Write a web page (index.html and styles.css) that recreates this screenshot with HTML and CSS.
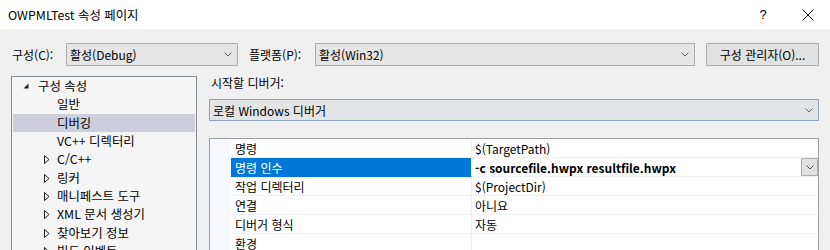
FILE: index.html
```html
<!DOCTYPE html>
<html lang="ko">
<head>
<meta charset="utf-8">
<title>OWPMLTest 속성 페이지</title>
<link rel="stylesheet" href="styles.css">
</head>
<body>
<div class="titlebar">
  <span class="title">OWPMLTest 속성 페이지</span>
  <span class="help">?</span>
  <span class="close"><svg width="12" height="12" viewBox="0 0 12 12"><path d="M0.5 0.5 L11.5 11.5 M11.5 0.5 L0.5 11.5" stroke="#1a1a1a" stroke-width="1" fill="none"/></svg></span>
</div>

<div class="toolbar">
  <span class="lbl lbl-config">구성(C):</span>
  <div class="combo combo-config"><span class="combo-text">활성(Debug)</span><svg class="chev" width="8" height="5" viewBox="0 0 8 5"><path d="M0.5 0.5 L4 4 L7.5 0.5" stroke="#606060" fill="none"/></svg></div>
  <span class="lbl lbl-platform">플랫폼(P):</span>
  <div class="combo combo-platform"><span class="combo-text">활성(Win32)</span><svg class="chev" width="8" height="5" viewBox="0 0 8 5"><path d="M0.5 0.5 L4 4 L7.5 0.5" stroke="#606060" fill="none"/></svg></div>
  <div class="btn">구성 관리자(O)...</div>
</div>

<div class="main">
  <div class="tree">
    <div class="node lvl0"><svg class="tri" width="6" height="6" viewBox="0 0 6 6"><polygon points="5.5,0.5 5.5,5.5 0.5,5.5" fill="#1e1e1e"/></svg><span>구성 속성</span></div>
    <div class="node lvl1"><span>일반</span></div>
    <div class="node lvl1 selected"><span>디버깅</span></div>
    <div class="node lvl1"><span>VC++ 디렉터리</span></div>
    <div class="node lvl1 has-kids"><svg class="tri" width="6" height="9" viewBox="0 0 6 9"><path d="M0.5 0.5 L5 4.5 L0.5 8.5 Z" stroke="#1e1e1e" fill="none"/></svg><span>C/C++</span></div>
    <div class="node lvl1 has-kids"><svg class="tri" width="6" height="9" viewBox="0 0 6 9"><path d="M0.5 0.5 L5 4.5 L0.5 8.5 Z" stroke="#1e1e1e" fill="none"/></svg><span>링커</span></div>
    <div class="node lvl1 has-kids"><svg class="tri" width="6" height="9" viewBox="0 0 6 9"><path d="M0.5 0.5 L5 4.5 L0.5 8.5 Z" stroke="#1e1e1e" fill="none"/></svg><span>매니페스트 도구</span></div>
    <div class="node lvl1 has-kids"><svg class="tri" width="6" height="9" viewBox="0 0 6 9"><path d="M0.5 0.5 L5 4.5 L0.5 8.5 Z" stroke="#1e1e1e" fill="none"/></svg><span>XML 문서 생성기</span></div>
    <div class="node lvl1 has-kids"><svg class="tri" width="6" height="9" viewBox="0 0 6 9"><path d="M0.5 0.5 L5 4.5 L0.5 8.5 Z" stroke="#1e1e1e" fill="none"/></svg><span>찾아보기 정보</span></div>
    <div class="node lvl1 has-kids"><svg class="tri" width="6" height="9" viewBox="0 0 6 9"><path d="M0.5 0.5 L5 4.5 L0.5 8.5 Z" stroke="#1e1e1e" fill="none"/></svg><span>빌드 이벤트</span></div>
  </div>

  <div class="pane">
    <div class="pane-label">시작할 디버거:</div>
    <div class="combo combo-debugger"><span class="combo-text">로컬 Windows 디버거</span><svg class="chev" width="8" height="5" viewBox="0 0 8 5"><path d="M0.5 0.5 L4 4 L7.5 0.5" stroke="#606060" fill="none"/></svg></div>
    <div class="grid">
      <div class="row"><div class="margin"></div><div class="name">명령</div><div class="value">$(TargetPath)</div></div>
      <div class="row active"><div class="margin"></div><div class="name">명령 인수</div><div class="value"><span class="val-text bold">-c sourcefile.hwpx resultfile.hwpx</span><span class="drop"><svg width="8" height="5" viewBox="0 0 8 5"><path d="M0.5 0.5 L4 4 L7.5 0.5" stroke="#505050" fill="none"/></svg></span></div></div>
      <div class="row"><div class="margin"></div><div class="name">작업 디렉터리</div><div class="value">$(ProjectDir)</div></div>
      <div class="row"><div class="margin"></div><div class="name">연결</div><div class="value">아니요</div></div>
      <div class="row"><div class="margin"></div><div class="name">디버거 형식</div><div class="value">자동</div></div>
      <div class="row"><div class="margin"></div><div class="name">환경</div><div class="value"></div></div>
    </div>
  </div>
</div>
</body>
</html>
```

FILE: styles.css
```css
* { box-sizing: border-box; }
html, body { margin: 0; padding: 0; }
body {
  width: 830px;
  height: 250px;
  overflow: hidden;
  background: #f0f0f0;
  font-family: "Noto Sans CJK KR", "Noto Sans", sans-serif;
  font-size: 12px;
  color: #000;
}

.titlebar {
  height: 29px;
  background: #fff;
  display: flex;
  align-items: center;
  padding-left: 8px;
}
.title { flex: 1; white-space: nowrap; font-size: 12.4px; }
.help {
  width: 46px;
  text-align: center;
  font-family: "Liberation Sans", sans-serif;
  font-size: 13px;
}
.close {
  width: 44px;
  display: flex;
  justify-content: center;
  align-items: center;
}

.toolbar {
  margin-top: 14px;
  height: 23px;
  display: flex;
  align-items: center;
  padding-left: 12px;
}
.lbl { white-space: nowrap; }
.lbl-config { width: 54px; }
.lbl-platform { width: 66px; margin-left: 11px; }

.combo {
  height: 23px;
  border: 1px solid #adadad;
  background: #e5e5e5;
  display: flex;
  align-items: center;
  padding: 0 5px 0 3px;
}
.combo-text { flex: 1; white-space: nowrap; }
.chev { display: block; }
.combo-config { width: 172px; }
.combo-platform { width: 380px; }

.btn {
  margin-left: 11px;
  width: 113px;
  height: 23px;
  border: 1px solid #adadad;
  background: #e1e1e1;
  display: flex;
  align-items: center;
  justify-content: center;
  white-space: nowrap;
}

.main {
  margin-top: 10px;
  display: flex;
  padding-left: 11px;
}

.tree {
  width: 186px;
  height: 174px;
  border: 1px solid #828790;
  border-bottom: none;
  background: #f5f5f5;
  padding: 0 1px;
  overflow: hidden;
}
.node {
  height: 18.33px;
  display: flex;
  align-items: center;
  position: relative;
  white-space: nowrap;
  font-size: 12.4px;
}
.node.lvl0 { padding-left: 25px; }
.node.lvl1 { padding-left: 44px; }
.node .tri { position: absolute; top: 50%; }
.node.lvl0 .tri { left: 10px; margin-top: -3px; }
.node.lvl1 .tri { left: 31px; margin-top: -4px; }
.node.selected { background: #cccedb; }

.pane {
  margin-left: 12px;
  width: 610px;
}
.pane-label {
  height: 13px;
  line-height: 13px;
  padding-left: 2px;
  margin-bottom: 10px;
  white-space: nowrap;
}
.combo-debugger {
  width: 610px;
  height: 22px;
  border-color: #8ca3bb;
  background: #e3e4e6;
}

.grid {
  margin-top: 17px;
  width: 610px;
  height: 112px;
  border: 1px solid #a0a0a0;
  border-bottom: none;
  background: #fff;
  overflow: hidden;
}
.row {
  display: flex;
  height: 19px;
}
.margin {
  width: 21px;
  background: #f5f8fc;
}
.name {
  width: 241px;
  padding-left: 4px;
  border-right: 1px solid #edf1f7;
  border-bottom: 1px solid #edf1f7;
  display: flex;
  align-items: center;
  white-space: nowrap;
}
.value {
  flex: 1;
  padding-left: 3px;
  border-bottom: 1px solid #edf1f7;
  display: flex;
  align-items: center;
  white-space: nowrap;
}
.row.active .name {
  background: #0078d7;
  color: #fff;
  border-bottom-color: #0078d7;
}
.val-text { flex: 1; }
.bold { font-weight: bold; }
.drop {
  width: 17px;
  height: 18px;
  border: 1px solid #adadad;
  background: #e1e1e1;
  display: flex;
  align-items: center;
  justify-content: center;
}
```
